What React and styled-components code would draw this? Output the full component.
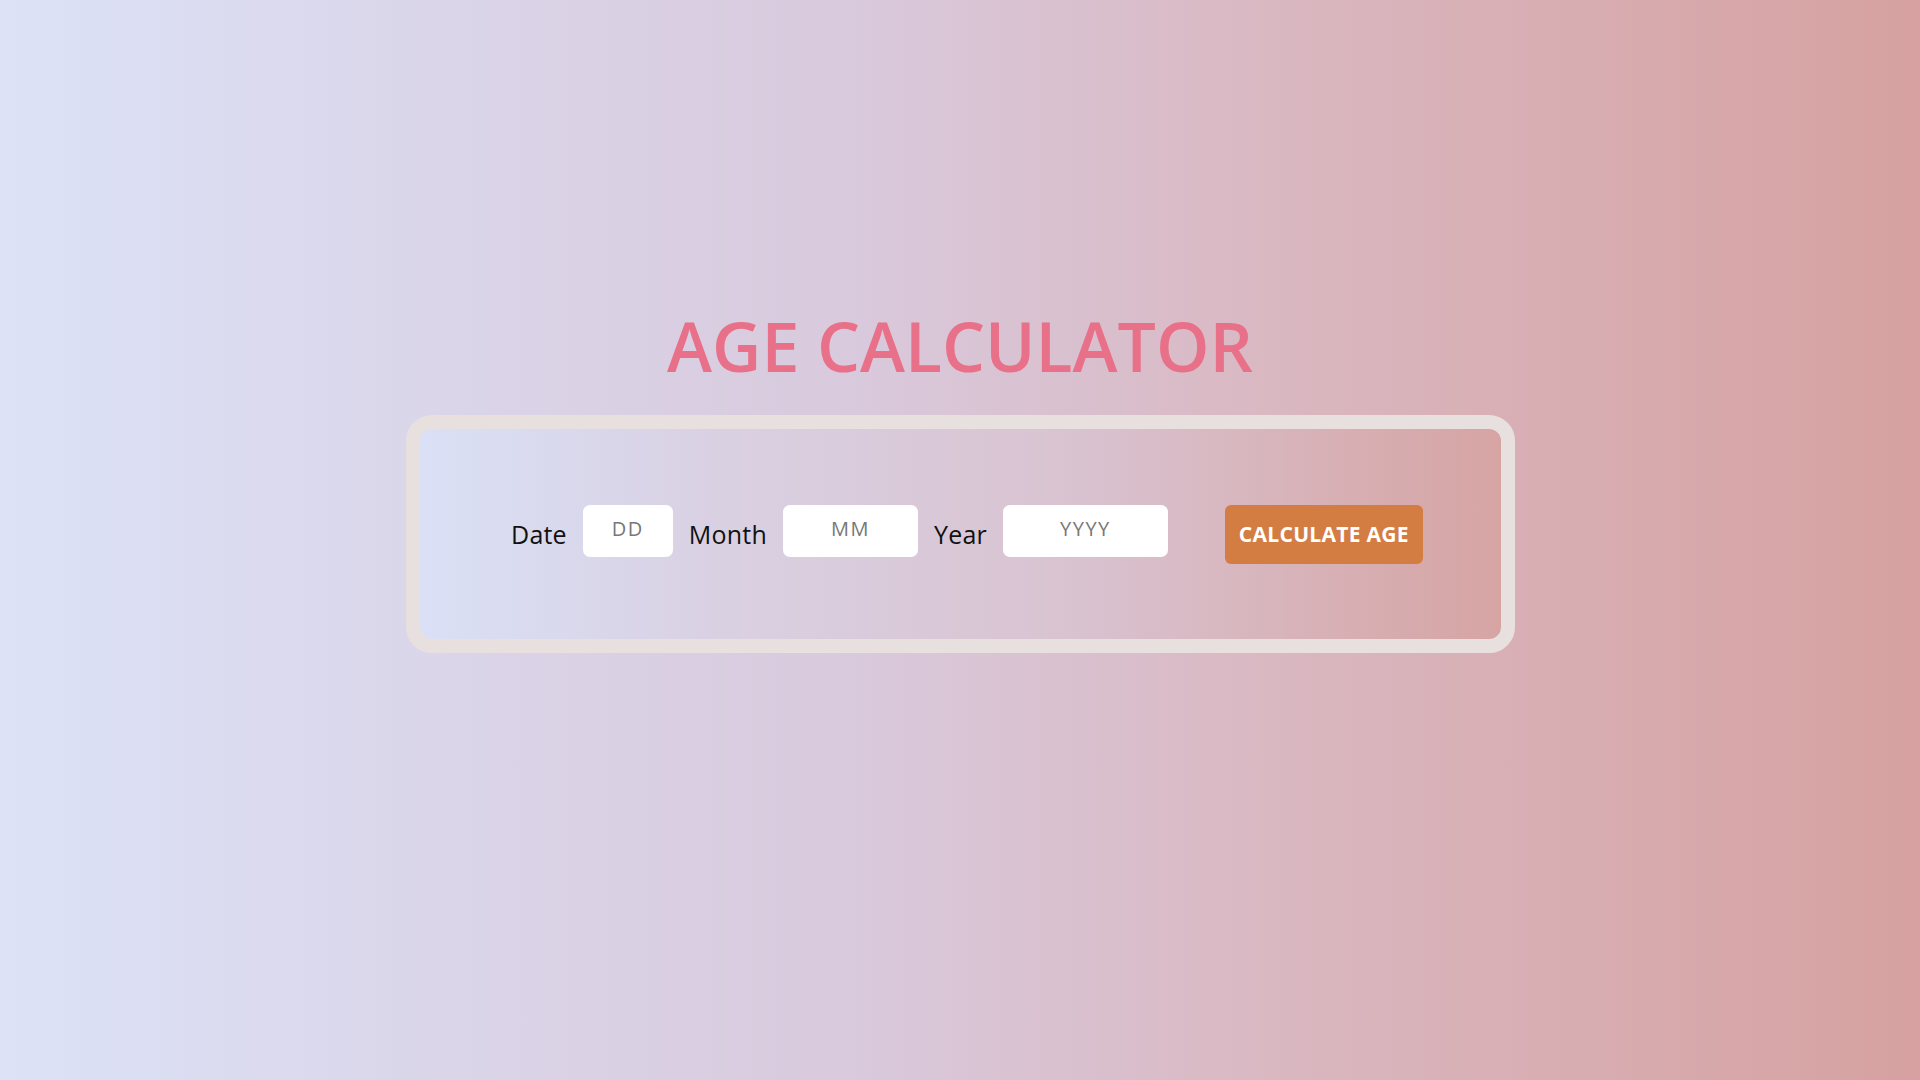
import React from 'react'
import styled, { createGlobalStyle } from 'styled-components'

const GlobalStyle = createGlobalStyle`
  * { box-sizing: border-box; }
  html, body { margin: 0; padding: 0; }
  body {
    font-family: "Open Sans", "Liberation Sans", sans-serif;
    background: linear-gradient(to right, #dce2f7, #d9c9dc 45%, #d9b5bd 70%, #d6a1a0);
    min-height: 100vh;
  }
`

const App = () => {
  return (
    <Page>
      <GlobalStyle />
      <Title>AGE CALCULATOR</Title>
      <Card>
        <Row>
          <Label>Date</Label>
          <Input w="90px" placeholder="DD" />
          <Label>Month</Label>
          <Input w="135px" placeholder="MM" />
          <Label>Year</Label>
          <Input w="165px" placeholder="YYYY" />
          <Button>CALCULATE AGE</Button>
        </Row>
      </Card>
    </Page>
  )
}

export default App

const Page = styled.div`
display: flex;
flex-direction: column;
align-items: center;
width: 100%;
min-height: 100vh;
padding-top: 312px;
`
const Title = styled.h1`
margin: 0 0 35px;
font-size: 68px;
line-height: 68px;
font-weight: 600;
color: #e87088;
`
const Card = styled.div`
width: 1109px;
height: 238px;
border: 14px solid #e8dfdf;
border-radius: 26px;
background: linear-gradient(to right, #dae0f6, #d9d2e4 25%, #d9c3d1 60%, #d6a4a3);
display: flex;
align-items: center;
justify-content: center;
`
const Row = styled.div`
display: flex;
align-items: flex-start;
gap: 16px;
margin-left: 14px;
`
const Label = styled.span`
font-size: 25px;
line-height: 59px;
letter-spacing: 0.2px;
color: #111;
`
const Input = styled.input`
width: ${({ w }) => w};
height: 52px;
border: none;
outline: none;
border-radius: 7px;
background: #fff;
text-align: center;
font-family: "Open Sans", "Liberation Sans", sans-serif;
font-size: 20px;
letter-spacing: 1.5px;
color: #333;
padding: 0 8px 4px;
&::placeholder { color: #777; }
`
const Button = styled.button`
width: 198px;
height: 59px;
margin-left: 41px;
border: none;
border-radius: 6px;
background: #d47d43;
color: #fff;
font-family: "Open Sans", "Liberation Sans", sans-serif;
font-size: 21px;
font-weight: 700;
letter-spacing: 0.3px;
cursor: pointer;
`
